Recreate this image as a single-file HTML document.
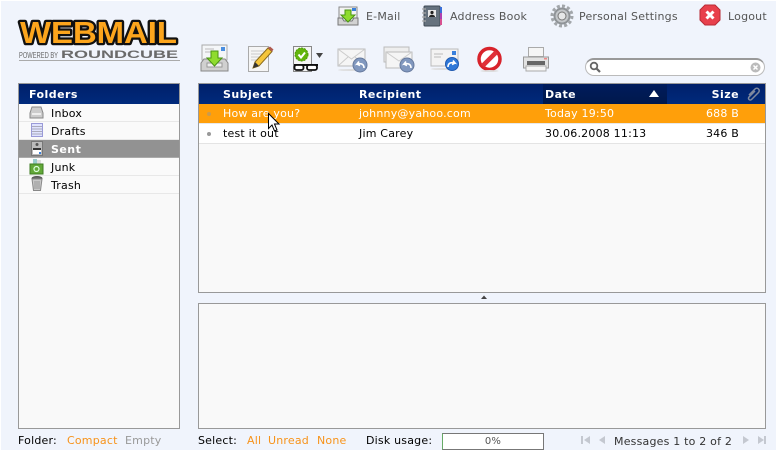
<!DOCTYPE html>
<html><head><meta charset="utf-8"><title>Webmail</title>
<style>
html,body{margin:0;padding:0}
body{width:776px;height:450px;position:relative;overflow:hidden;background:#f0f4fc;font:11px "DejaVu Sans",Verdana,sans-serif;color:#000;letter-spacing:.2px}
.a{position:absolute;white-space:nowrap}
svg{position:absolute;overflow:visible}
.box{position:absolute;background:#f9f9f9;border:1px solid #999;box-sizing:border-box}
.hd{position:absolute;height:20px;background:linear-gradient(#00206a,#002a7c);color:#fff;font-weight:bold;line-height:22px;letter-spacing:.45px}
.b{color:#fff;font-weight:bold;line-height:22px;letter-spacing:.45px}
.fr{position:absolute;left:19px;width:160px;height:17px;border-bottom:1px solid #e8e8e8;background:#fafafa;line-height:19px}
.fr span{position:absolute;left:32px}
.nav{color:#555;line-height:14px}
.o{color:#f7931a}
</style></head><body>
<div class="a" style="left:0;top:0;width:776px;height:1px;background:#fff"></div>
<div class="a" style="left:0;top:0;width:1px;height:450px;background:#fff"></div>

<!-- logo -->
<svg style="left:0;top:0" width="200" height="70">
<text x="20" y="43" font-family="Liberation Sans" font-weight="bold" font-size="31" textLength="157" lengthAdjust="spacingAndGlyphs" fill="#fca51c" stroke="#111" stroke-width="4.500" stroke-linejoin="round" paint-order="stroke" letter-spacing="0">WEBMAIL</text>
<text x="19" y="58" font-family="Liberation Sans" font-size="8" textLength="39" lengthAdjust="spacingAndGlyphs" fill="#666" letter-spacing="0">POWERED BY</text>
<text x="61" y="58" font-family="Liberation Sans" font-weight="bold" font-size="11" textLength="117" lengthAdjust="spacingAndGlyphs" fill="#6a6a6a" letter-spacing="0">ROUNDCUBE</text>
<rect x="19" y="60" width="161" height="1" fill="#aaa"/>
</svg>

<!-- top nav -->
<svg style="left:337px;top:4px" width="24" height="24"><rect x="2" y="3" width="18" height="11" fill="#f3f3f3" stroke="#888"/><rect x="15" y="4" width="4" height="3" fill="#3a80dc"/><path d="M1 14h4l2 3h8l2-3h4v7H1z" fill="#d2d2d2" stroke="#777"/><path d="M8 6h6v5h4l-7 7-7-7h4z" fill="#8fdc2e" stroke="#4a9414"/></svg>
<div class="a nav" style="left:366px;top:10px">E-Mail</div>
<svg style="left:422px;top:4px" width="24" height="24"><rect x="2" y="2" width="16" height="20" rx="1" fill="#66727e" stroke="#3e4954"/><rect x="6" y="6" width="8" height="7" fill="#e8e8e8"/><circle cx="10" cy="8.500" r="1.600" fill="#222"/><path d="M7 13c0-3 6-3 6 0z" fill="#222"/><path d="M0 5h4M0 9h4M0 13h4M0 17h4" stroke="#aaa" stroke-width="1.200"/><rect x="18" y="3" width="2" height="6" fill="#3a6fd8"/><rect x="18" y="9" width="2" height="6" fill="#b040b0"/><rect x="18" y="15" width="2" height="6" fill="#d85090"/></svg>
<div class="a nav" style="left:450px;top:10px">Address Book</div>
<svg style="left:550px;top:4px" width="24" height="24"><circle cx="12" cy="12" r="7.500" fill="#c4c7ca" stroke="#8f9397" stroke-width="2"/><circle cx="12" cy="12" r="10" fill="none" stroke="#a2a6aa" stroke-width="3" stroke-dasharray="3 2.200"/><circle cx="12" cy="12" r="4" fill="#e6e7e8" stroke="#777"/></svg>
<div class="a nav" style="left:579px;top:10px">Personal Settings</div>
<svg style="left:699px;top:4px" width="24" height="24"><path d="M6 1h10l5 5v10l-5 5H6l-5-5V6z" fill="#e8404c" stroke="#b92a35" stroke-linejoin="round"/><path d="M7.500 7.500l7 7m0-7l-7 7" stroke="#fff" stroke-width="3"/></svg>
<div class="a nav" style="left:728px;top:10px">Logout</div>

<!-- toolbar -->
<svg style="left:200px;top:44px" width="30" height="32"><rect x="2" y="1" width="25" height="15" fill="#f4f6f8" stroke="#aaa"/><rect x="21" y="3" width="4" height="4" fill="#4a8ee0"/><path d="M5 5h9M5 8h7" stroke="#bbb"/><path d="M1 19l3-4h21l3 4v8H1z" fill="#d0d0d0" stroke="#888"/><path d="M7 19h15v4H7z" fill="#eee" stroke="#999"/><path d="M11 7h7v7h4l-7.500 8L7 14h4z" fill="#8fdc2e" stroke="#4a9414"/></svg>
<svg style="left:247px;top:45px" width="28" height="30"><rect x="1.500" y="1.500" width="20" height="25" fill="#f5f5f5" stroke="#aaa"/><path d="M4 6h13M4 9h13M4 12h9M4 15h6" stroke="#ccc"/><path d="M6 23l2-6L21 3l4 3.500L12 21z" fill="#f5c53a" stroke="#8a6a1a"/><path d="M21 3l4 3.500 1.500-2L23 1.500z" fill="#b05a50"/><path d="M6 23l2-6 4 4z" fill="#333"/></svg>
<svg style="left:291px;top:45px" width="36" height="30"><rect x="2.500" y="1.500" width="18" height="25" fill="#f5f5f5" stroke="#888"/><circle cx="10.500" cy="9.500" r="6.500" fill="#62b40c" stroke="#4c9a06" stroke-dasharray="2 1"/><path d="M7.500 9.500l2.500 3 4-5" stroke="#fff" stroke-width="2" fill="none"/><path d="M3 20h24" stroke="#111" stroke-width="2"/><rect x="3.500" y="20" width="9" height="5" rx="2" fill="#fff" stroke="#111" stroke-width="1.800"/><rect x="16" y="20" width="10" height="5" rx="2" fill="#fff" stroke="#111" stroke-width="1.800"/><path d="M25 8h7l-3.500 5z" fill="#444"/></svg>
<svg style="left:337px;top:48px" width="32" height="26"><rect x="1" y="1" width="27" height="17" fill="#f5f5f5" stroke="#bbb"/><path d="M1 1l13.500 10L28 1M1 18l10-9M28 18l-10-9" fill="none" stroke="#ccc"/><ellipse cx="14" cy="22" rx="13" ry="1" fill="#ddd"/><circle cx="23" cy="17" r="7" fill="#8198bf" stroke="#66799c"/><path d="M27 20c0-4-3-5-7-4l2-2.500m-2 2.500l3 1.500" stroke="#fff" stroke-width="1.600" fill="none"/></svg>
<svg style="left:383px;top:46px" width="32" height="28"><rect x="1" y="1" width="25" height="15" fill="#eee" stroke="#bbb"/><rect x="3" y="6" width="26" height="16" fill="#f5f5f5" stroke="#bbb"/><path d="M3 6l13 9 13-9" fill="none" stroke="#ccc"/><circle cx="24" cy="19" r="7" fill="#8198bf" stroke="#66799c"/><path d="M28 22c0-4-3-5-7-4l2-2.500m-2 2.500l3 1.500" stroke="#fff" stroke-width="1.600" fill="none"/></svg>
<svg style="left:430px;top:48px" width="30" height="26"><rect x="1" y="1" width="27" height="17" fill="#f3f3f3" stroke="#bbb"/><rect x="22" y="3" width="4" height="4" fill="#3a80dc"/><path d="M4 6h9M4 9h7" stroke="#bbb"/><ellipse cx="13" cy="21" rx="12" ry="1" fill="#ddd"/><circle cx="22" cy="16" r="6.500" fill="#2f78d8" stroke="#1f5ab0"/><path d="M18 19c0-4 3-5 7-4l-2-2.500m2 2.500l-3 1.500" stroke="#fff" stroke-width="1.600" fill="none"/></svg>
<svg style="left:477px;top:47px" width="26" height="26"><circle cx="12.500" cy="12" r="10.500" fill="#fff" stroke="#d8232b" stroke-width="3.500"/><path d="M5.500 19L19.500 5" stroke="#e03038" stroke-width="4.500"/><ellipse cx="12.500" cy="24" rx="9" ry="1" fill="#ddd"/></svg>
<svg style="left:522px;top:46px" width="30" height="28"><rect x="6.500" y="1.500" width="15" height="9" fill="#f5f5f5" stroke="#aaa"/><path d="M1.500 11h25v11H1.500z" fill="#e2e2e2" stroke="#999"/><rect x="5" y="15" width="18" height="4" fill="#666"/><rect x="4" y="20" width="20" height="5" fill="#f5f5f5" stroke="#aaa"/><rect x="22" y="12" width="3" height="1.500" fill="#e88"/></svg>

<!-- search -->
<div class="a" style="left:585px;top:58px;width:180px;height:18px;box-sizing:border-box;background:#fff;border:1px solid #bbb;border-top:2px solid #999;border-radius:9px"></div>
<svg style="left:589px;top:61px" width="14" height="14"><circle cx="5" cy="5" r="3.300" fill="none" stroke="#666" stroke-width="1.800"/><path d="M7.500 7.500l3.500 3.500" stroke="#666" stroke-width="2.200"/></svg>
<svg style="left:750px;top:62px" width="12" height="12"><circle cx="5.500" cy="5.500" r="5" fill="#bbb"/><path d="M3.500 3.500l4 4m0-4l-4 4" stroke="#fff" stroke-width="1.500"/></svg>

<!-- folders -->
<div class="box" style="left:18px;top:83px;width:162px;height:346px"></div>
<div class="hd" style="left:19px;top:84px;width:160px"><span class="a" style="left:10px;top:0">Folders</span></div>
<div class="fr" style="top:104px"><span>Inbox</span></div>
<div class="fr" style="top:122px"><span>Drafts</span></div>
<div class="fr" style="top:140px;background:#929292;color:#fff;font-weight:bold;border-bottom:1px solid #aaa;letter-spacing:.45px"><span>Sent</span></div>
<div class="fr" style="top:158px"><span>Junk</span></div>
<div class="fr" style="top:176px"><span>Trash</span></div>
<svg style="left:29px;top:105px" width="16" height="16"><path d="M1 8l2-6h9l2 6v5H1z" fill="#ccc" stroke="#888"/><path d="M3 8h9v2H3z" fill="#eee"/></svg>
<svg style="left:31px;top:123px" width="13" height="15"><rect x=".5" y=".5" width="11" height="13" fill="#dfe3ff" stroke="#9a9ad8"/><path d="M1 3.500h10M1 6h10M1 8.500h10M1 11h10" stroke="#aab"/></svg>
<svg style="left:31px;top:141px" width="13" height="15"><rect x=".5" y=".5" width="11" height="14" fill="#bbb" stroke="#777"/><rect x="2" y="7" width="8" height="6" fill="#fff"/><rect x="2" y="7" width="8" height="2" fill="#333"/><circle cx="6" cy="3.500" r="1.500" fill="#555"/><rect x="8" y="11" width="2" height="2" fill="#3a80dc"/></svg>
<svg style="left:29px;top:158px" width="16" height="17"><rect x="4" y="1" width="4" height="5" fill="#9cc"/><rect x="8" y="2" width="4" height="4" fill="#ddd"/><path d="M1 6h13v10H1z" fill="#62a838" stroke="#3f7c22"/><circle cx="7.500" cy="11" r="2.500" fill="none" stroke="#dfd" stroke-width="1.200"/></svg>
<svg style="left:31px;top:176px" width="13" height="16"><ellipse cx="6" cy="2.500" rx="5" ry="2" fill="#666" stroke="#555"/><path d="M1 3l1.500 11.500h7L11 3z" fill="#c8c8c8" stroke="#888"/><path d="M4 5v8M6 5v8M8 5v8" stroke="#999"/></svg>

<!-- message list -->
<div class="box" style="left:198px;top:83px;width:568px;height:210px"></div>
<div class="hd" style="left:199px;top:84px;width:566px"></div>
<div class="a" style="left:543px;top:84px;width:124px;height:20px;background:linear-gradient(#001c5c,#00184c)"></div>
<div class="a b" style="left:223px;top:84px">Subject</div>
<div class="a b" style="left:359px;top:84px">Recipient</div>
<div class="a b" style="left:545px;top:84px">Date</div>
<svg style="left:649px;top:90px" width="10" height="8"><path d="M0 7L5 0l5 7z" fill="#fff"/></svg>
<div class="a b" style="right:37px;top:84px">Size</div>
<svg style="left:746px;top:86px" width="16" height="16"><path d="M3 9l6-6a2.200 2.200 0 0 1 3.500 3.500l-7 7a1.500 1.500 0 0 1-2.500-2.500l6-6" fill="none" stroke="#7f899e" stroke-width="1.500"/></svg>

<div class="a" style="left:199px;top:104px;width:566px;height:19px;background:#ff9f0a"></div>
<div class="a" style="left:199px;top:123px;width:566px;height:1px;background:#e8e8e8"></div>
<div class="a" style="left:199px;top:124px;width:566px;height:19px;background:#fff"></div>
<div class="a" style="left:199px;top:143px;width:566px;height:1px;background:#e4e4e4"></div>
<div class="a" style="left:207px;top:112px;width:4px;height:4px;border-radius:2px;background:#c99b50"></div>
<div class="a" style="left:207px;top:132px;width:4px;height:4px;border-radius:2px;background:#999"></div>
<div class="a" style="left:223px;top:107px;color:#fff">How are you?</div>
<div class="a" style="left:359px;top:107px;color:#fff">johnny@yahoo.com</div>
<div class="a" style="left:545px;top:107px;color:#fff">Today 19:50</div>
<div class="a" style="right:37px;top:107px;color:#fff">688 B</div>
<div class="a" style="left:223px;top:127px">test it out</div>
<div class="a" style="left:359px;top:127px">Jim Carey</div>
<div class="a" style="left:545px;top:127px">30.06.2008 11:13</div>
<div class="a" style="right:37px;top:127px">346 B</div>
<svg style="left:268px;top:113px" width="14" height="22"><path d="M.5.500v15l3.500-3.500 2.500 6 2.500-1-2.500-6H11z" fill="#fff" stroke="#000"/></svg>

<!-- splitter -->
<svg style="left:481px;top:295px" width="6" height="5"><path d="M0 4l3-3.500L6 4z" fill="#444"/></svg>

<!-- preview -->
<div class="box" style="left:198px;top:303px;width:568px;height:126px"></div>

<!-- footer -->
<div class="a" style="left:18px;top:434px">Folder:</div>
<div class="a o" style="left:67px;top:434px">Compact</div>
<div class="a" style="left:125px;top:434px;color:#999">Empty</div>
<div class="a" style="left:198px;top:434px">Select:</div>
<div class="a o" style="left:247px;top:434px">All</div>
<div class="a o" style="left:268px;top:434px">Unread</div>
<div class="a o" style="left:317px;top:434px">None</div>
<div class="a" style="left:366px;top:434px">Disk usage:</div>
<div class="a" style="left:442px;top:433px;width:102px;height:17px;box-sizing:border-box;background:#fff;border:1px solid #777;border-left:1px solid #6a6;text-align:center;line-height:15px;font-size:10px;color:#555">0%</div>
<svg style="left:581px;top:435px" width="26" height="10"><path d="M1 1v8" stroke="#c4c8d0" stroke-width="2"/><path d="M9 1v8L3 5zM24 1v8l-6-4z" fill="#c4c8d0"/></svg>
<div class="a" style="left:614px;top:435px;color:#333">Messages 1 to 2 of 2</div>
<svg style="left:741px;top:435px" width="26" height="10"><path d="M2 1v8l6-4zM17 1v8l6-4z" fill="#c4c8d0"/><path d="M24 1v8" stroke="#c4c8d0" stroke-width="2"/></svg>
</body></html>
